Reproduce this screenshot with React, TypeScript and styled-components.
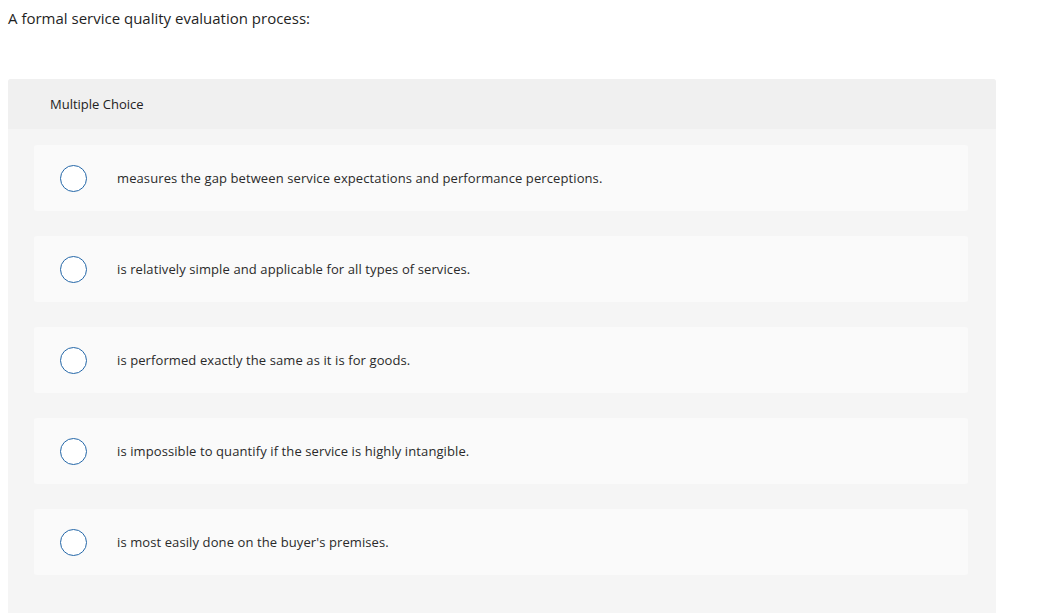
import React from 'react';
import styled, { createGlobalStyle } from 'styled-components';

const GlobalStyle = createGlobalStyle`
  html, body {
    margin: 0;
    padding: 0;
    background: #ffffff;
  }
  body {
    font-family: "Open Sans", Lato, Arial, sans-serif;
    color: #222;
  }
`;

const Page = styled.div`
  padding: 8px 43px 0 8px;
`;

const Question = styled.p`
  margin: 0;
  font-size: 15px;
  line-height: 20px;
  color: #1f1f1f;
`;

const Panel = styled.section`
  margin-top: 51px;
  background: #f5f5f5;
  border-radius: 3px 3px 0 0;
  padding-bottom: 40px;
`;

const PanelHeader = styled.div`
  height: 50px;
  display: flex;
  align-items: center;
  padding-left: 42px;
  background: #f0f0f0;
  border-radius: 3px 3px 0 0;
  font-size: 13px;
  color: #222;
`;

const Options = styled.div`
  display: flex;
  flex-direction: column;
  gap: 25px;
  padding: 16px 28px 0 26px;
`;

const Option = styled.label`
  height: 66px;
  display: flex;
  align-items: center;
  background: #fafafa;
  border-radius: 3px;
  cursor: pointer;
`;

const Radio = styled.span`
  box-sizing: border-box;
  width: 27px;
  height: 27px;
  margin-left: 26px;
  border: 1.5px solid #2467a8;
  border-radius: 50%;
  background: #fff;
  flex-shrink: 0;
`;

const OptionText = styled.span`
  margin-left: 30px;
  font-size: 13px;
  letter-spacing: 0.1px;
  color: #2a2a2a;
`;

const choices = [
  'measures the gap between service expectations and performance perceptions.',
  'is relatively simple and applicable for all types of services.',
  'is performed exactly the same as it is for goods.',
  'is impossible to quantify if the service is highly intangible.',
  "is most easily done on the buyer's premises.",
];

const App: React.FC = () => {
  return (
    <>
      <GlobalStyle />
      <Page>
        <Question>A formal service quality evaluation process:</Question>
        <Panel>
          <PanelHeader>Multiple Choice</PanelHeader>
          <Options>
            {choices.map((c) => (
              <Option key={c}>
                <Radio />
                <OptionText>{c}</OptionText>
              </Option>
            ))}
          </Options>
        </Panel>
      </Page>
    </>
  );
};

export default App;
